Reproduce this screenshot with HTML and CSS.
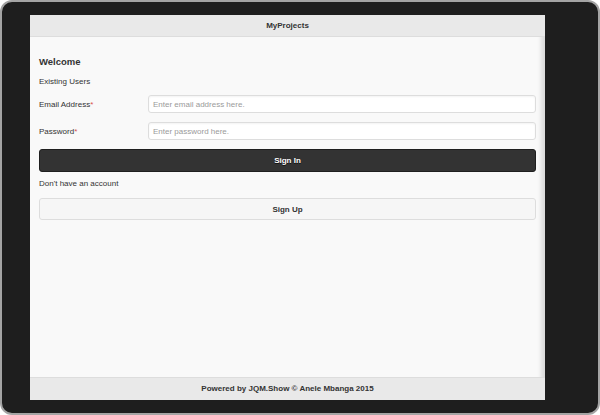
FILE: index.html
```html
<!DOCTYPE html>
<html lang="en">
<head>
  <meta charset="UTF-8" />
  <meta name="viewport" content="width=device-width, initial-scale=1.0" />
  <title>MyProjects</title>
  <link rel="stylesheet" href="styles.css">
</head>
<body>

  <div class="device">
    <div class="screen">
      <div class="header">MyProjects</div>

      <div class="content">
        <h3 class="welcome">Welcome</h3>
        <p class="note">Existing Users</p>

        <div class="field">
          <label for="email">Email Address<span class="req">*</span></label>
          <input type="email" id="email" placeholder="Enter email address here." />
        </div>

        <div class="field">
          <label for="password">Password<span class="req">*</span></label>
          <input type="password" id="password" placeholder="Enter password here." />
        </div>

        <button class="btn btn-dark">Sign In</button>

        <p class="note note-gap">Don't have an account</p>

        <button class="btn btn-light">Sign Up</button>
      </div>

      <div class="footer">Powered by JQM.Show © Anele Mbanga 2015</div>
    </div>
  </div>

</body>
</html>
```

FILE: styles.css
```css
body {
  margin: 0;
  background-color: #fff;
  font-family: 'Liberation Sans', Arial, sans-serif;
  color: #333;
}

.device {
  width: 600px;
  height: 415px;
  box-sizing: border-box;
  border: 2px solid #a4a4a4;
  border-radius: 12px;
  background-color: #1e1e1e;
  padding: 13px 0 0 28px;
  overflow: hidden;
}

.screen {
  width: 515px;
  height: 385px;
  background-color: #f9f9f9;
  display: flex;
  flex-direction: column;
  box-shadow: inset -4px 0 4px rgba(0,0,0,0.12);
}

.header {
  height: 21px;
  line-height: 21px;
  background-color: #e9e9e9;
  border-bottom: 1px solid #dddddd;
  text-align: center;
  font-size: 8px;
  font-weight: bold;
}

.content {
  flex: 1;
  padding: 19px 9px 0;
}

.welcome {
  margin: 0;
  font-size: 9.5px;
  line-height: 12px;
  font-weight: bold;
}

.note {
  margin: 8px 0 0;
  font-size: 8px;
  line-height: 12px;
}

.note-gap {
  margin-top: 6px;
}

.field {
  display: flex;
  align-items: center;
  margin-top: 7px;
}

.field + .field {
  margin-top: 9px;
}

.field label {
  width: 109px;
  flex-shrink: 0;
  font-size: 8px;
}

.req {
  color: #d9534f;
}

.field input {
  flex: 1;
  height: 18px;
  box-sizing: border-box;
  margin: 0;
  padding: 0 4px;
  border: 1px solid #dddddd;
  border-radius: 3px;
  background-color: #fff;
  font-family: inherit;
  font-size: 8px;
  color: #333;
  box-shadow: inset 0 1px 2px rgba(0,0,0,0.05);
}

.field input::placeholder {
  color: #9a9a9a;
}

.btn {
  display: block;
  width: 100%;
  box-sizing: border-box;
  margin: 0;
  padding: 0;
  border-radius: 3px;
  font-family: inherit;
  font-size: 8px;
  font-weight: bold;
  cursor: pointer;
}

.btn-dark {
  height: 23px;
  margin-top: 9px;
  background-color: #333;
  border: 1px solid #1f1f1f;
  color: #fff;
  text-shadow: 0 1px 0 #111;
}

.btn-light {
  height: 22px;
  margin-top: 8px;
  background-color: #f6f6f6;
  border: 1px solid #dddddd;
  color: #333;
}

.footer {
  height: 22px;
  line-height: 22px;
  background-color: #e9e9e9;
  border-top: 1px solid #dddddd;
  text-align: center;
  font-size: 8px;
  font-weight: bold;
}
```
